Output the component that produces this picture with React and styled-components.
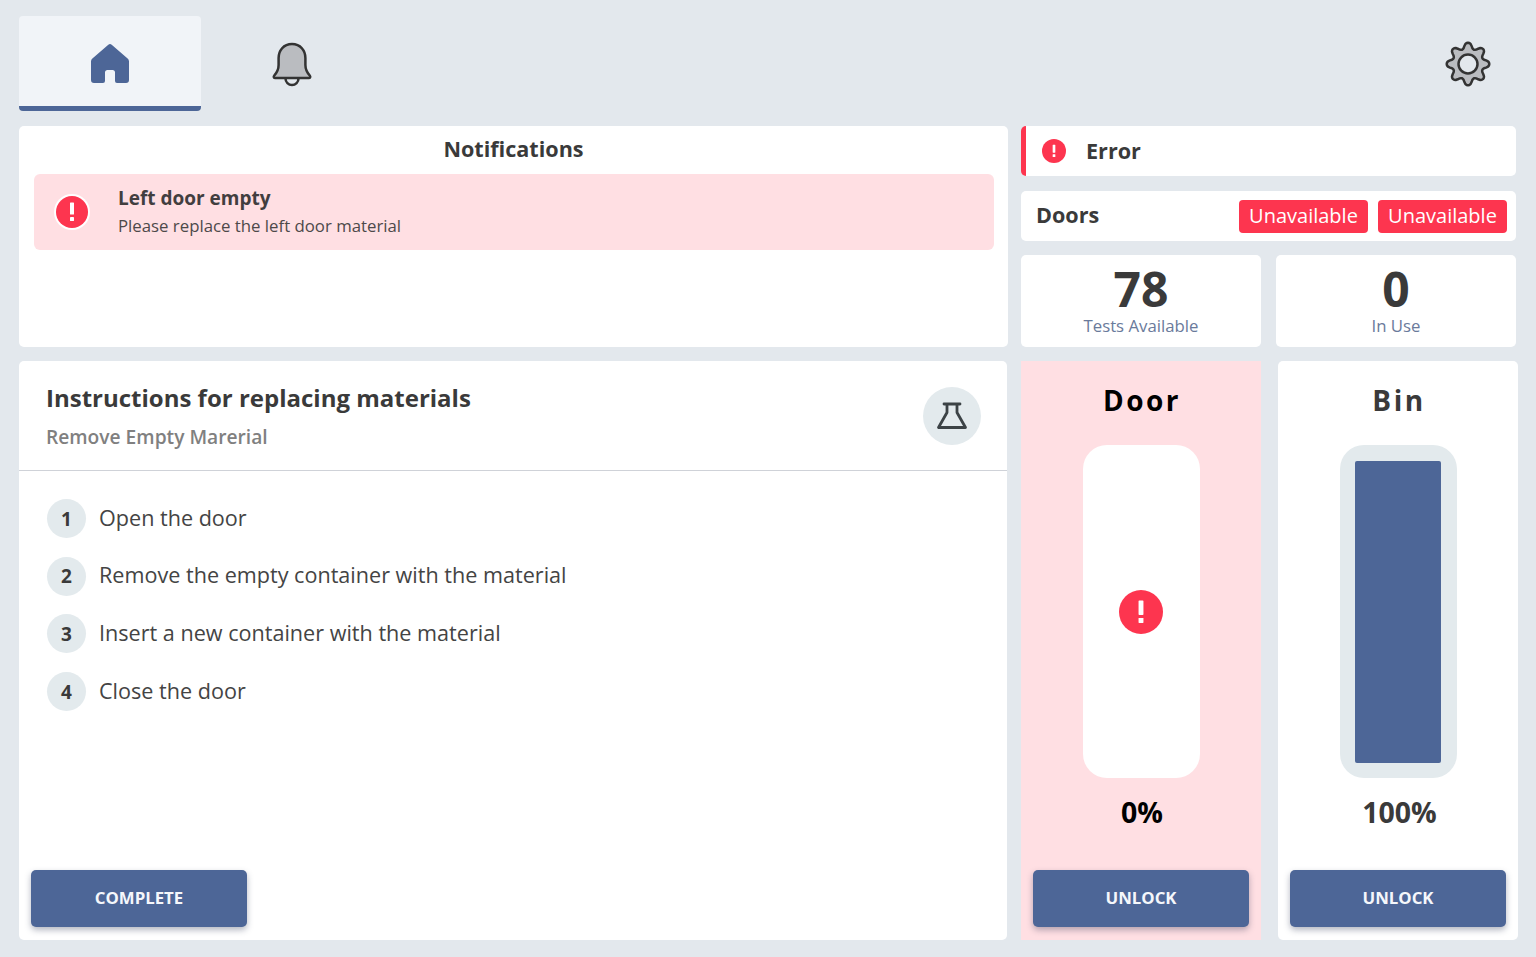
import React from "react";
import styled, { createGlobalStyle } from "styled-components";

const Global = createGlobalStyle`
  html, body { margin: 0; padding: 0; background: #e3e8ed; }
  body { font-family: "Open Sans", "Noto Sans", sans-serif; color: #3a3a3a; overflow: hidden; }
  * { box-sizing: border-box; }
`;

const Page = styled.div`
  width: 1536px;
  height: 957px;
  padding: 16px 0 0 19px;
  display: flex;
  flex-direction: column;
`;

const Nav = styled.nav`
  display: flex;
  width: 1497px;
  height: 95px;
  margin-bottom: 15px;
`;

const Tab = styled.div`
  width: 182px;
  height: 95px;
  display: flex;
  align-items: center;
  justify-content: center;
  padding-top: 6px;
  border-radius: 4px;
  background: ${(p) => (p.$active ? "#f1f4f8" : "transparent")};
  border-bottom: 5px solid ${(p) => (p.$active ? "#4d6697" : "transparent")};
`;

const SettingsSlot = styled.div`
  margin-left: auto;
  margin-right: 24px;
  width: 48px;
  height: 95px;
  display: flex;
  align-items: center;
  justify-content: center;
`;

const BellSvg = styled.svg`
  margin-top: 3px;
`;

const TopRow = styled.div`
  display: grid;
  grid-template-columns: 989px 495px;
  column-gap: 13px;
  height: 221px;
  margin-bottom: 14px;
`;

const Card = styled.section`
  background: #fff;
  border-radius: 5px;
`;

const NotificationsCard = styled(Card)`
  padding: 0 15px;
`;

const NotificationsTitle = styled.h2`
  margin: 0;
  height: 48px;
  line-height: 45px;
  font-size: 21.600px;
  font-weight: 700;
  text-align: center;
  color: #3a3a3a;
`;

const Alert = styled.div`
  width: 960px;
  height: 76px;
  display: flex;
  align-items: center;
  padding-left: 20px;
  background: #ffdfe3;
  border-radius: 6px;
`;

const AlertText = styled.div`
  margin-left: 28px;
  display: flex;
  flex-direction: column;
  gap: 2px;
`;

const AlertTitle = styled.div`
  font-size: 19px;
  line-height: 26px;
  font-weight: 700;
  color: #423e3f;
`;

const AlertBody = styled.div`
  font-size: 16.800px;
  line-height: 26px;
  color: #4d494a;
`;

const Side = styled.div`
  display: flex;
  flex-direction: column;
`;

const StatusBar = styled(Card)`
  height: 50px;
  display: flex;
  align-items: center;
  padding-left: 16px;
  border-left: 5px solid #fd354f;
  margin-bottom: 15px;
`;

const StatusLabel = styled.span`
  margin-left: 20px;
  padding-bottom: 2px;
  font-size: 21.600px;
  font-weight: 700;
  color: #3a3a3a;
`;

const DoorsBar = styled(Card)`
  height: 50px;
  display: flex;
  align-items: center;
  gap: 10px;
  padding: 0 9px 0 15px;
  margin-bottom: 14px;
`;

const DoorsLabel = styled.span`
  margin-right: auto;
  padding-bottom: 4px;
  font-size: 21.600px;
  font-weight: 700;
  color: #3a3a3a;
`;

const Badge = styled.span`
  width: 129px;
  height: 33px;
  display: flex;
  align-items: center;
  justify-content: center;
  padding-bottom: 2px;
  background: #fd354f;
  color: #fff;
  font-size: 20px;
  border-radius: 4px;
`;

const Stats = styled.div`
  display: grid;
  grid-template-columns: 240px 240px;
  column-gap: 15px;
`;

const Stat = styled(Card)`
  height: 92px;
  padding-top: 6px;
  display: flex;
  flex-direction: column;
  align-items: center;
`;

const StatValue = styled.div`
  font-size: 48px;
  line-height: 56px;
  font-weight: 700;
  color: #3a3a3a;
`;

const StatLabel = styled.div`
  font-size: 16.800px;
  line-height: 18px;
  color: #6a7a9b;
`;

const BottomRow = styled.div`
  display: grid;
  grid-template-columns: 988px 240px 240px;
  height: 579px;
`;

const InstructionsCard = styled(Card)`
  display: flex;
  flex-direction: column;
  padding-bottom: 13px;
`;

const InstructionsHead = styled.header`
  height: 110px;
  flex: none;
  display: flex;
  align-items: flex-start;
  justify-content: space-between;
  padding: 20px 26px 0 27px;
  border-bottom: 1px solid #cfd2d8;
`;

const InstructionsTitle = styled.h1`
  margin: 0;
  font-size: 24px;
  line-height: 34px;
  font-weight: 700;
  color: #3a3a3a;
`;

const InstructionsSub = styled.div`
  margin-top: 9px;
  font-size: 19.200px;
  line-height: 26px;
  font-weight: 600;
  color: #808080;
`;

const FlaskBadge = styled.div`
  width: 58px;
  height: 58px;
  margin-top: 6px;
  border-radius: 50%;
  background: #e3eaed;
  display: flex;
  align-items: center;
  justify-content: center;
`;

const Steps = styled.ol`
  list-style: none;
  margin: 0;
  padding: 28px 0 0 28px;
  flex: 1;
  display: flex;
  flex-direction: column;
  gap: 18.700px;
`;

const Step = styled.li`
  display: flex;
  align-items: center;
  gap: 13px;
  height: 39px;
  font-size: 21.600px;
  color: #444;
`;

const StepText = styled.span`
  padding-bottom: 3px;
`;

const StepNumber = styled.span`
  width: 39px;
  height: 39px;
  border-radius: 50%;
  background: #e3eaed;
  display: flex;
  align-items: center;
  justify-content: center;
  font-size: 19px;
  font-weight: 700;
  color: #3a3a3a;
`;

const ActionButton = styled.button`
  width: 216px;
  height: 57px;
  flex: none;
  padding: 0 0 2px;
  border: 0;
  border-radius: 5px;
  background: #4d6697;
  color: #f5f7fb;
  font: 700 16.800px "Open Sans", sans-serif;
  text-transform: uppercase;
  box-shadow: 0 3px 6px rgba(40, 50, 80, 0.35);
`;

const CompleteButton = styled(ActionButton)`
  margin-left: 12px;
`;

const GaugeCard = styled.section`
  margin-left: ${(p) => p.$offset}px;
  width: 240px;
  border-radius: ${(p) => (p.$error ? "0" : "5px")};
  background: ${(p) => (p.$error ? "#ffdfe3" : "#fff")};
  display: flex;
  flex-direction: column;
  align-items: center;
  padding-bottom: 13px;
`;

const GaugeTitle = styled.h3`
  margin: 0;
  height: 84px;
  padding: 19px 0 0 2px;
  font-size: 28px;
  line-height: 40px;
  font-weight: 700;
  letter-spacing: 2.500px;
  color: ${(p) => (p.$error ? "#000" : "#3a3a3a")};
`;

const Chamber = styled.div`
  width: 117px;
  height: 333px;
  flex: none;
  border-radius: 24px;
  padding: 16px 15.500px 15px;
  display: flex;
  align-items: center;
  justify-content: center;
  background: ${(p) => (p.$error ? "#fff" : "#e3eaed")};
`;

const Fill = styled.div`
  width: 100%;
  height: 100%;
  border-radius: 2px;
  background: #4d6697;
`;

const GaugeValue = styled.div`
  flex: 1;
  display: flex;
  align-items: center;
  padding: 0 0 24px ${(p) => (p.$error ? 2 : 3)}px;
  font-size: 28.500px;
  font-weight: 700;
  color: ${(p) => (p.$error ? "#000" : "#3a3a3a")};
`;

const ErrorIcon = ({ size, ring }) => (
  <svg width={size} height={size} viewBox="0 0 36 36" aria-hidden="true">
    {ring && <circle cx="18" cy="18" r="18" fill="#fff" />}
    <circle cx="18" cy="18" r={ring ? 16 : 18} fill="#fd354f" />
    <rect x="16" y="8.500" width="4" height="12" rx="0.600" fill="#fff" />
    <rect x="16" y="23" width="4" height="4" rx="0.400" fill="#fff" />
  </svg>
);

const HomeIcon = () => (
  <svg width="42" height="42" viewBox="0 0 42 42" aria-hidden="true">
    <path
      d="M19.300 1.700a2.600 2.600 0 0 1 3.400 0L38.600 15.600A3.500 3.500 0 0 1 40 18.400V37a3 3 0 0 1-3 3H28a2 2 0 0 1-2-2V29.500a2.500 2.500 0 0 0-2.500-2.500h-5A2.500 2.500 0 0 0 16 29.500V38a2 2 0 0 1-2 2H5a3 3 0 0 1-3-3V18.400a3.500 3.500 0 0 1 1.400-2.800Z"
      fill="#4d6697"
    />
  </svg>
);

const BellIcon = () => (
  <BellSvg width="42" height="48" viewBox="0 0 42 48" fill="none" aria-hidden="true">
    <path d="M14.500 36.500a6.500 6.500 0 1 0 13 0" stroke="#333" strokeWidth="2.500" />
    <path
      d="M21 2C12.500 2 7.600 8.600 7.600 16V23C7.600 28 5.500 31 3.300 33.500C2.200 34.800 2.800 36 4.300 36H37.700C39.200 36 39.800 34.800 38.700 33.500C36.500 31 34.400 28 34.400 23V16C34.400 8.600 29.500 2 21 2Z"
      fill="#babcc0"
      stroke="#333"
      strokeWidth="2.500"
      strokeLinejoin="round"
    />
  </BellSvg>
);

const gearPath = (() => {
  const teeth = 8;
  const cx = 24;
  const cy = 24;
  const pts = [];
  for (let i = 0; i < teeth * 12; i++) {
    const a = (i / (teeth * 12)) * Math.PI * 2 - Math.PI / 2;
    const c = Math.cos((a + Math.PI / 2) * teeth);
    const r = 18.400 + 2.900 * Math.sign(c) * Math.pow(Math.abs(c), 0.7);
    pts.push(`${(cx + r * Math.cos(a)).toFixed(2)} ${(cy + r * Math.sin(a)).toFixed(2)}`);
  }
  return `M${pts.join("L")}Z`;
})();

const GearIcon = () => (
  <svg width="48" height="48" viewBox="0 0 48 48" aria-hidden="true">
    <path d={gearPath} fill="#babcc0" stroke="#333" strokeWidth="2.500" strokeLinejoin="round" />
    <circle cx="24" cy="24" r="9.500" fill="#e3e8ed" stroke="#333" strokeWidth="2.500" />
  </svg>
);

const FlaskIcon = () => (
  <svg width="32" height="28" viewBox="0 0 32 28" fill="none" aria-hidden="true">
    <path
      d="M8 2H24M11 2V10.500L2.500 25.500H29.500L21 10.500V2"
      stroke="#3c4346"
      strokeWidth="2.800"
      strokeLinecap="round"
      strokeLinejoin="round"
    />
  </svg>
);

const steps = [
  "Open the door",
  "Remove the empty container with the material",
  "Insert a new container with the material",
  "Close the door",
];

export default function App() {
  return (
    <Page>
      <Global />
      <Nav>
        <Tab $active><HomeIcon /></Tab>
        <Tab><BellIcon /></Tab>
        <SettingsSlot><GearIcon /></SettingsSlot>
      </Nav>
      <TopRow>
        <NotificationsCard>
          <NotificationsTitle>Notifications</NotificationsTitle>
          <Alert>
            <ErrorIcon size={36} ring />
            <AlertText>
              <AlertTitle>Left door empty</AlertTitle>
              <AlertBody>Please replace the left door material</AlertBody>
            </AlertText>
          </Alert>
        </NotificationsCard>
        <Side>
          <StatusBar>
            <ErrorIcon size={24} />
            <StatusLabel>Error</StatusLabel>
          </StatusBar>
          <DoorsBar>
            <DoorsLabel>Doors</DoorsLabel>
            <Badge>Unavailable</Badge>
            <Badge>Unavailable</Badge>
          </DoorsBar>
          <Stats>
            <Stat>
              <StatValue>78</StatValue>
              <StatLabel>Tests Available</StatLabel>
            </Stat>
            <Stat>
              <StatValue>0</StatValue>
              <StatLabel>In Use</StatLabel>
            </Stat>
          </Stats>
        </Side>
      </TopRow>
      <BottomRow>
        <InstructionsCard>
          <InstructionsHead>
            <div>
              <InstructionsTitle>Instructions for replacing materials</InstructionsTitle>
              <InstructionsSub>Remove Empty Marerial</InstructionsSub>
            </div>
            <FlaskBadge><FlaskIcon /></FlaskBadge>
          </InstructionsHead>
          <Steps>
            {steps.map((s, i) => (
              <Step key={s}>
                <StepNumber>{i + 1}</StepNumber>
                <StepText>{s}</StepText>
              </Step>
            ))}
          </Steps>
          <CompleteButton>Complete</CompleteButton>
        </InstructionsCard>
        <GaugeCard $error $offset={14}>
          <GaugeTitle $error>Door</GaugeTitle>
          <Chamber $error><ErrorIcon size={44} /></Chamber>
          <GaugeValue $error>0%</GaugeValue>
          <ActionButton>Unlock</ActionButton>
        </GaugeCard>
        <GaugeCard $offset={31}>
          <GaugeTitle>Bin</GaugeTitle>
          <Chamber><Fill /></Chamber>
          <GaugeValue>100%</GaugeValue>
          <ActionButton>Unlock</ActionButton>
        </GaugeCard>
      </BottomRow>
    </Page>
  );
}
